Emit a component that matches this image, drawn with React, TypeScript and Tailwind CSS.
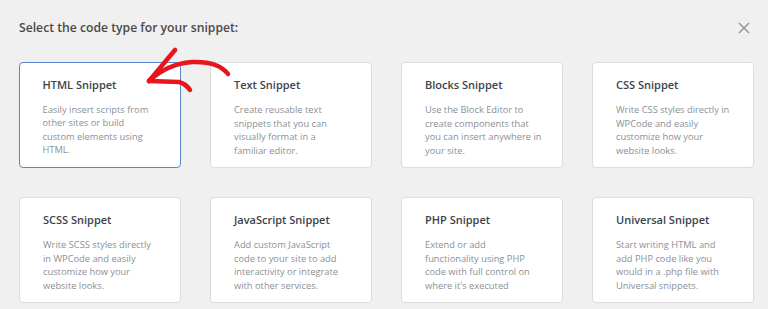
import React from 'react';

// lines are kept as they wrap in the dialog
const snippets = [
  { title: 'HTML Snippet', lines: ['Easily insert scripts from', 'other sites or build', 'custom elements using', 'HTML.'], active: true },
  { title: 'Text Snippet', lines: ['Create reusable text', 'snippets that you can', 'visually format in a', 'familiar editor.'] },
  { title: 'Blocks Snippet', lines: ['Use the Block Editor to', 'create components that', 'you can insert anywhere in', 'your site.'] },
  { title: 'CSS Snippet', lines: ['Write CSS styles directly in', 'WPCode and easily', 'customize how your', 'website looks.'] },
  { title: 'SCSS Snippet', lines: ['Write SCSS styles directly', 'in WPCode and easily', 'customize how your', 'website looks.'] },
  { title: 'JavaScript Snippet', lines: ['Add custom JavaScript', 'code to your site to add', 'interactivity or integrate', 'with other services.'] },
  { title: 'PHP Snippet', lines: ['Extend or add', 'functionality using PHP', 'code with full control on', "where it's executed"] },
  { title: 'Universal Snippet', lines: ['Start writing HTML and', 'add PHP code like you', 'would in a .php file with', 'Universal snippets.'] },
];

export default function App() {
  return (
    <div className="relative w-[768px] h-[309px] overflow-hidden bg-[#f0f0f0] pl-[19px] pt-[19px] font-['Open_Sans',sans-serif]">
      {/* header */}
      <div className="flex items-center justify-between pr-[18px]">
        <h2 className="text-[12.2px] leading-[18px] font-semibold text-[#4a4a4a]">
          Select the code type for your snippet:
        </h2>
        <button className="text-[#8c8f94]">
          <svg width="12" height="12" viewBox="0 0 12 12" fill="none" stroke="currentColor" strokeWidth="1.4">
            <path d="M1 1L11 11M11 1L1 11" />
          </svg>
        </button>
      </div>

      {/* cards */}
      <div className="grid grid-cols-[repeat(4,162px)] gap-[29px] mt-[25px]">
        {snippets.map((s) => (
          <div
            key={s.title}
            className={
              s.active
                ? 'h-[106px] bg-white rounded-[4px] border-[1.5px] border-[#5a85cf] pt-[13.5px] pl-[22.5px] pr-[8px]'
                : 'h-[106px] bg-white rounded-[4px] border border-[#dcdcde] pt-[14px] pl-[23px] pr-[8px]'
            }
          >
            <div className="text-[11px] leading-[15px] font-semibold text-[#3c434a]">{s.title}</div>
            <div className="mt-[11px] text-[9.3px] leading-[13.5px] text-[#8c8f94]">
              {s.lines.map((l) => (
                <div key={l} className="whitespace-nowrap">{l}</div>
              ))}
            </div>
          </div>
        ))}
      </div>

      {/* red annotation arrow */}
      <svg
        className="absolute left-0 top-0 pointer-events-none"
        width="768"
        height="309"
        viewBox="0 0 768 309"
        fill="none"
        stroke="#e8161c"
        strokeWidth="4.5"
        strokeLinecap="round"
        strokeLinejoin="round"
      >
        <path d="M228 74 Q218 61 192 62 Q167 64 149 81" />
        <path d="M175 50 L149 81" />
        <path d="M149 81 L179 82 Q186 84 190 90" />
      </svg>
    </div>
  );
}
